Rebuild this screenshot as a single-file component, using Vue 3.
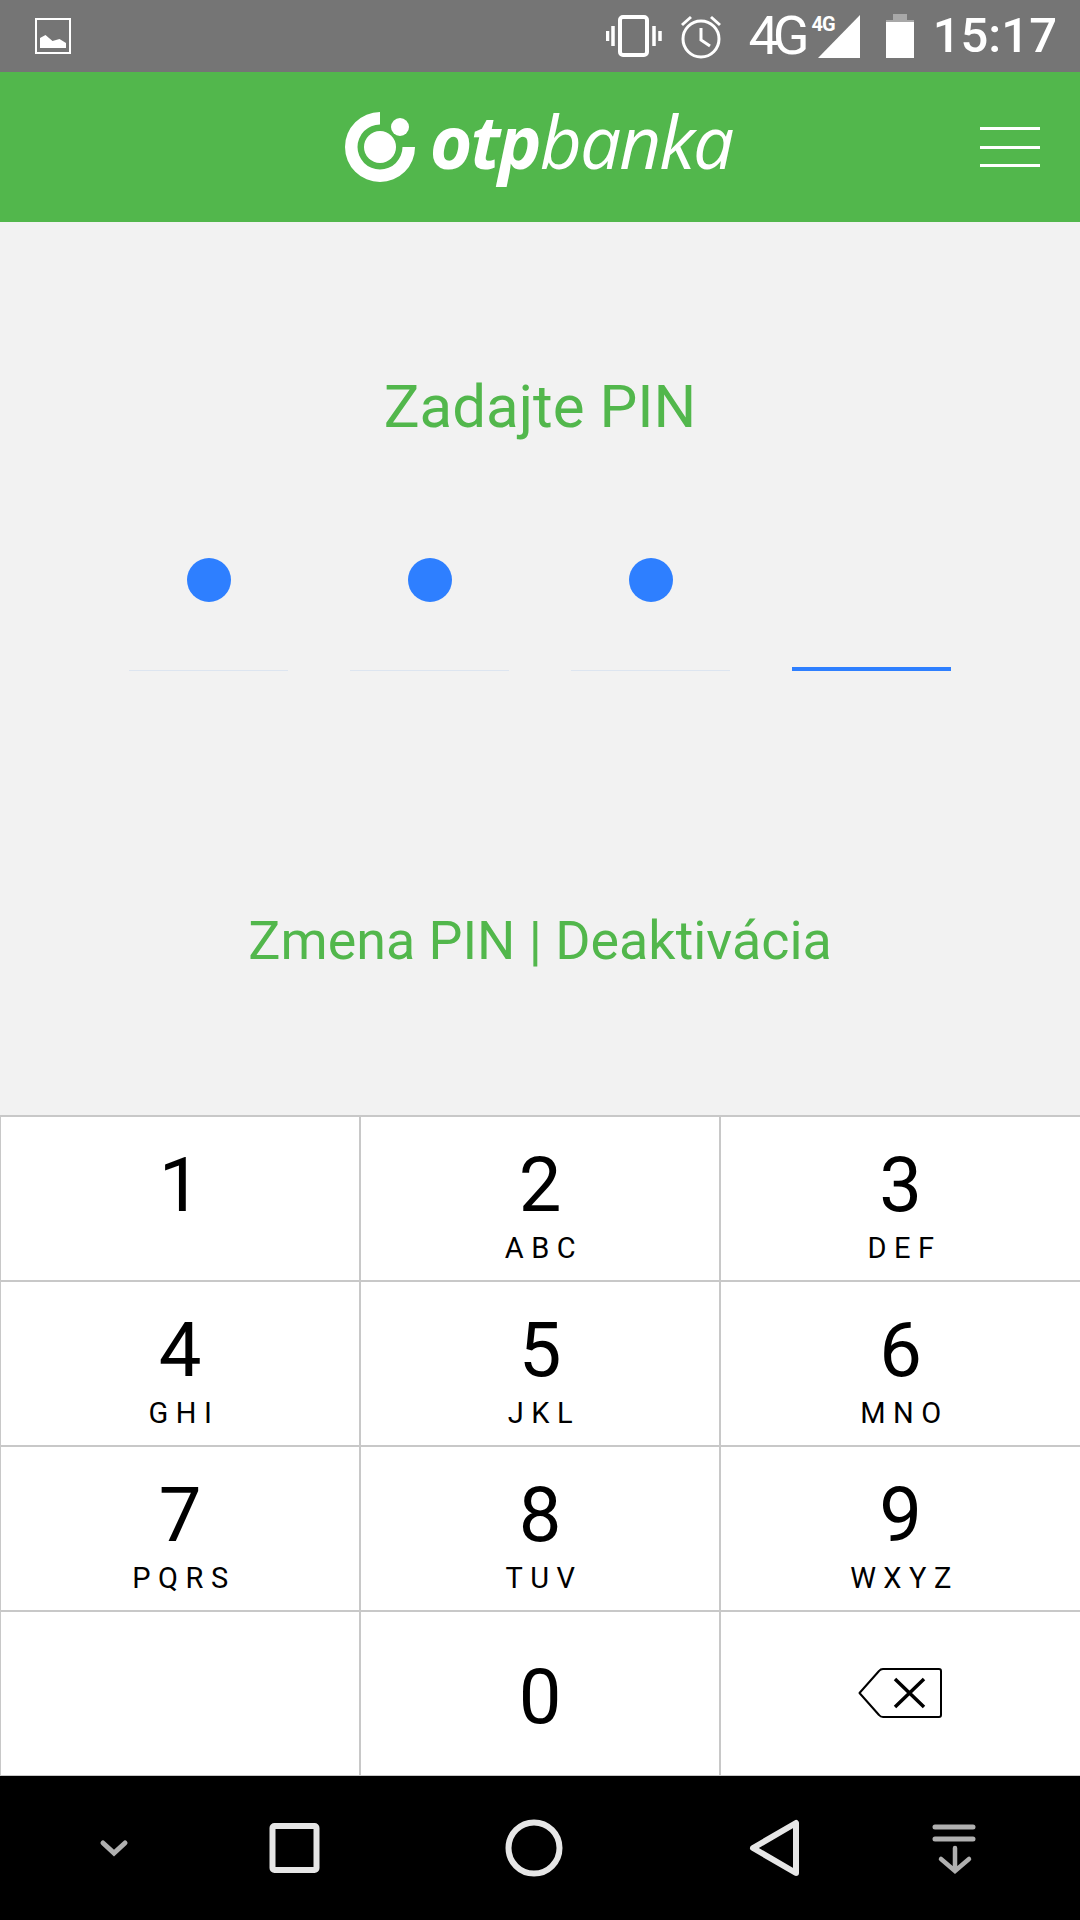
<template>
  <div class="screen">
    <div class="status-bar">
      <svg class="status-bar__image" width="36" height="36" viewBox="0 0 36 36">
        <rect x="1" y="1" width="34" height="34" fill="none" stroke="#fff" stroke-width="2" />
        <path d="M5 30V20L10.500 17L17.500 23L24.500 21L31 25V30Z" fill="#fff" />
      </svg>
      <div class="status-bar__right">
        <svg class="vibrate" width="56" height="42" viewBox="0 0 56 42">
          <rect x="14" y="2" width="27" height="38" rx="3" fill="none" stroke="#fff" stroke-width="4" />
          <path d="M7 11V31M1.500 16V26M48 11V31M54 16V26" stroke="#fff" stroke-width="3.500" fill="none" />
        </svg>
        <svg class="alarm" width="42" height="46" viewBox="0 0 42 46">
          <circle cx="21" cy="26" r="18" fill="none" stroke="#fff" stroke-width="3" />
          <path d="M21 15V27L30 33M2 12L11 4M40 12L31 4" stroke="#fff" stroke-width="3" fill="none" />
        </svg>
        <span class="net">4G</span>
        <span class="net-small">4G</span>
        <svg class="signal" width="42" height="43" viewBox="0 0 42 43">
          <path d="M42 0V43H0Z" fill="#fff" />
        </svg>
        <svg class="battery" width="28" height="44" viewBox="0 0 28 44">
          <path d="M7 0H21V6H7Z" fill="#a8a8a8" />
          <path d="M0 6H28V8H0Z" fill="#a8a8a8" />
          <path d="M0 8H28V44H0Z" fill="#fff" />
        </svg>
        <span class="time">15:17</span>
      </div>
    </div>

    <header class="header">
      <div class="logo">
        <svg width="70" height="70" viewBox="0 0 70 70">
          <path d="M35 0A35 35 0 1 0 70 35H57.500A22.500 22.500 0 1 1 35 12.500Z" fill="#fff" />
          <circle cx="35" cy="35" r="16" fill="#fff" />
          <circle cx="55" cy="15" r="9" fill="#fff" />
        </svg>
        <span class="logo__text"><b>otp</b>banka</span>
      </div>
      <button class="menu" aria-label="Menu">
        <span></span>
        <span></span>
        <span></span>
      </button>
    </header>

    <main class="pin">
      <h1 class="pin__title">Zadajte PIN</h1>
      <div class="pin__slots">
        <div v-for="(filled, i) in slots" :key="i" class="slot" :class="{ 'slot--active': !filled }">
          <span v-if="filled" class="slot__dot"></span>
        </div>
      </div>
      <p class="pin__links">Zmena PIN | Deaktivácia</p>
    </main>

    <div class="keypad">
      <button v-for="key in keys" :key="key.digit" class="key">
        <span class="key__digit" :class="{ 'key__digit--solo': key.solo }">{{ key.digit }}</span>
        <span v-if="key.letters" class="key__letters">{{ key.letters }}</span>
      </button>
      <button class="key key--icon" aria-label="Delete">
        <svg width="84" height="50" viewBox="0 0 84 50">
          <path d="M1.500 25L21 3Q22.500 1 25 1H81Q83 1 83 3V47Q83 49 81 49H25Q22.500 49 21 47Z" fill="none" stroke="#000" stroke-width="2" stroke-linejoin="round" />
          <path d="M37 11L66 39M66 11L37 39" fill="none" stroke="#000" stroke-width="3.500" />
        </svg>
      </button>
    </div>

    <nav class="nav">
      <svg width="1080" height="144" viewBox="0 0 1080 144">
        <path d="M103 67L114 77L125 67" fill="none" stroke="#b0b0b0" stroke-width="5" stroke-linecap="round" />
        <rect x="272.500" y="50" width="44" height="44" rx="2" fill="none" stroke="#e6e6e6" stroke-width="6" />
        <circle cx="534" cy="72" r="25.500" fill="none" stroke="#e6e6e6" stroke-width="6" />
        <path d="M753 72L796 47V97Z" fill="none" stroke="#e6e6e6" stroke-width="6" stroke-linejoin="round" />
        <path d="M935 51H973M935 63H973" stroke="#b0b0b0" stroke-width="5" stroke-linecap="round" fill="none" />
        <path d="M955 72V94M941 83L955 95L969 83" stroke="#b0b0b0" stroke-width="4.500" stroke-linecap="round" fill="none" />
      </svg>
    </nav>
  </div>
</template>

<script setup>
const slots = [true, true, true, false]

const keys = [
  { digit: '1', letters: '' },
  { digit: '2', letters: 'ABC' },
  { digit: '3', letters: 'DEF' },
  { digit: '4', letters: 'GHI' },
  { digit: '5', letters: 'JKL' },
  { digit: '6', letters: 'MNO' },
  { digit: '7', letters: 'PQRS' },
  { digit: '8', letters: 'TUV' },
  { digit: '9', letters: 'WXYZ' },
  { digit: '', letters: '' },
  { digit: '0', letters: '', solo: true },
]
</script>

<style scoped>
.screen {
  width: 1080px;
  height: 1920px;
  display: flex;
  flex-direction: column;
  background: #f2f2f2;
  font-family: Roboto, sans-serif;
  overflow: hidden;
}

.status-bar {
  height: 72px;
  flex-shrink: 0;
  display: flex;
  align-items: center;
  justify-content: space-between;
  padding: 0 23px 0 35px;
  background: #757575;
  color: #fff;
}

.status-bar__right {
  display: flex;
  align-items: center;
}

.alarm {
  margin-left: 18px;
}

.net {
  margin-left: 26px;
  font-size: 54px;
  font-weight: 400;
  letter-spacing: -6px;
  line-height: 72px;
}

.net-small {
  align-self: flex-start;
  margin: 13px 0 0 8px;
  font-size: 20px;
  font-weight: 700;
  line-height: 22px;
  letter-spacing: -1px;
}

.signal {
  margin-left: -17px;
}

.battery {
  margin-left: 26px;
}

.time {
  margin-left: 19px;
  font-size: 49px;
  font-weight: 500;
  line-height: 72px;
}

.header {
  position: relative;
  height: 150px;
  flex-shrink: 0;
  display: flex;
  align-items: center;
  justify-content: center;
  background: #52b74c;
}

.logo {
  display: flex;
  align-items: center;
  gap: 15px;
  margin-right: 3px;
  color: #fff;
}

.logo__text {
  padding-bottom: 12px;
  font-family: "Open Sans", sans-serif;
  font-size: 73px;
  font-style: italic;
  line-height: 72px;
  letter-spacing: -2px;
}

.logo__text b {
  font-weight: 700;
}

.menu {
  position: absolute;
  top: 55px;
  right: 40px;
  width: 60px;
  padding: 0;
  display: flex;
  flex-direction: column;
  gap: 15.500px;
  border: none;
  background: none;
}

.menu span {
  height: 3px;
  background: #fff;
}

.pin {
  flex: 1;
  display: flex;
  flex-direction: column;
  align-items: center;
  color: #52b74c;
}

.pin__title {
  margin: 150px 0 0;
  font-size: 60px;
  font-weight: 400;
  line-height: 70px;
}

.pin__slots {
  margin-top: 116px;
  display: grid;
  grid-template-columns: repeat(4, 159px);
  gap: 62px;
}

.slot {
  height: 113px;
  display: flex;
  justify-content: center;
  box-sizing: border-box;
  border-bottom: 1px solid #dde5f0;
}

.slot--active {
  border-bottom: 4px solid #2e7fff;
}

.slot__dot {
  width: 44px;
  height: 44px;
  border-radius: 50%;
  background: #2e7fff;
}

.pin__links {
  margin: 235px 0 0;
  font-size: 53.800px;
  line-height: 70px;
}

.keypad {
  display: grid;
  grid-template-columns: 360px 360px 361px;
  grid-auto-rows: 165px;
  height: 661px;
  margin-left: -1px;
  flex-shrink: 0;
  box-sizing: border-box;
  border-bottom: 1px solid #c8c8c8;
  background: #fff;
}

.key {
  display: flex;
  flex-direction: column;
  align-items: center;
  padding: 0;
  border: none;
  border-left: 2px solid #c8c8c8;
  border-top: 2px solid #c8c8c8;
  background: #fff;
  color: #000;
  font-family: inherit;
}

.key--icon {
  justify-content: center;
}

.key--icon svg {
  margin: 0 2px 2px 0;
}

.key__digit {
  height: 80px;
  margin-top: 28px;
  font-size: 76px;
  line-height: 80px;
}

.key__digit--solo {
  margin-top: 45px;
}

.key__letters {
  margin-top: 7px;
  margin-left: 8px;
  font-size: 29px;
  line-height: 32px;
  letter-spacing: 7.500px;
}

.nav {
  height: 144px;
  flex-shrink: 0;
  background: #000;
}

.nav svg {
  display: block;
}
</style>
